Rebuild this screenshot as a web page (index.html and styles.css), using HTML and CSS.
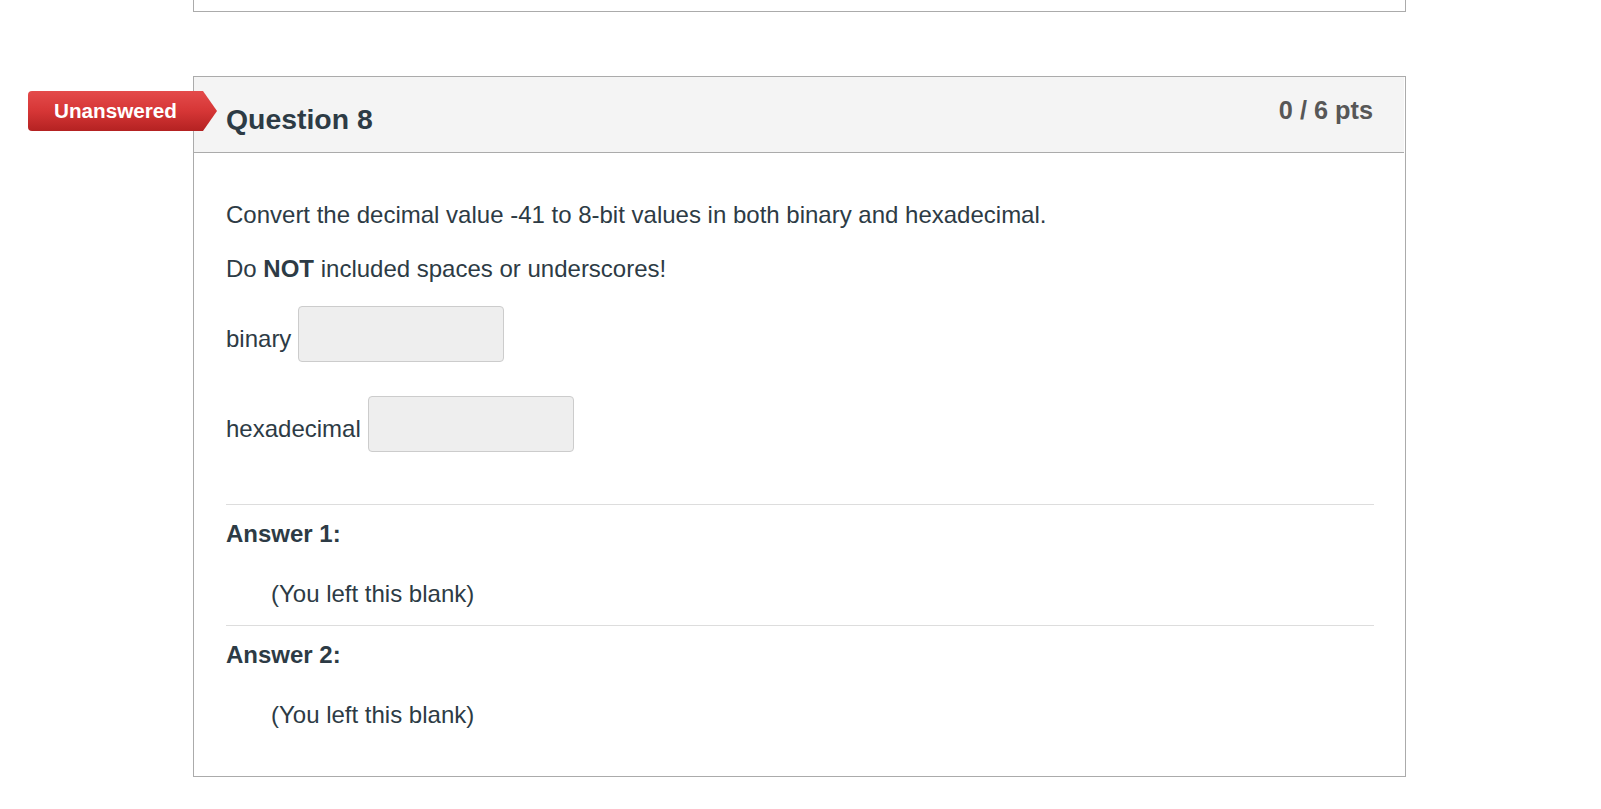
FILE: index.html
```html
<!DOCTYPE html>
<html lang="en">
<head>
<meta charset="utf-8">
<title>Question 8</title>
<link rel="stylesheet" href="styles.css">
</head>
<body>
<div class="page">
  <div class="prev-question"></div>

  <div class="question">
    <div class="badge">Unanswered</div>
    <div class="question-header">
      <h2 class="question-title">Question 8</h2>
      <div class="question-points">0 / 6 pts</div>
    </div>
    <div class="question-body">
      <p class="q-text">Convert the decimal value -41 to 8-bit values in both binary and hexadecimal.</p>
      <p class="q-text">Do <strong>NOT</strong> included spaces or underscores!</p>
      <div class="field-row">
        <span class="field-label">binary</span>
        <span class="field-input"></span>
      </div>
      <div class="field-row">
        <span class="field-label">hexadecimal</span>
        <span class="field-input"></span>
      </div>

      <div class="answers">
        <div class="answer">
          <div class="answer-label">Answer 1:</div>
          <div class="answer-value">(You left this blank)</div>
        </div>
        <div class="answer">
          <div class="answer-label">Answer 2:</div>
          <div class="answer-value">(You left this blank)</div>
        </div>
      </div>
    </div>
  </div>
</div>
</body>
</html>
```

FILE: styles.css
```css
html, body {
  margin: 0;
  padding: 0;
  background: #ffffff;
}

body {
  font-family: "Liberation Sans", Arial, sans-serif;
  color: #2d3b45;
}

.page {
  width: 1213px;
  margin-left: 193px;
}

.prev-question {
  height: 11px;
  border: 1px solid #ababab;
  border-top: none;
}

.question {
  position: relative;
  margin-top: 64px;
  border: 1px solid #ababab;
}

.badge {
  position: absolute;
  left: -166px;
  top: 14px;
  width: 189px;
  height: 40px;
  box-sizing: border-box;
  padding-right: 14px;
  border-radius: 4px 0 0 4px;
  background: linear-gradient(to bottom, #e44b4b 0%, #d63636 50%, #b42222 100%);
  clip-path: polygon(0 0, 175px 0, 189px 50%, 175px 100%, 0 100%);
  color: #ffffff;
  font-weight: bold;
  font-size: 20.7px;
  line-height: 40px;
  text-align: center;
}

.question-header {
  height: 76px;
  box-sizing: border-box;
  margin-right: 1px;
  padding: 18px 31px 0 32px;
  background: #f4f4f4;
  border-bottom: 1px solid #ababab;
  display: flex;
  justify-content: space-between;
  align-items: flex-start;
}

.question-title {
  margin: 7px 0 0 0;
  font-size: 28.4px;
  line-height: 1.2;
  font-weight: bold;
  color: #2d3b45;
}

.question-points {
  font-size: 25.3px;
  line-height: 1.2;
  font-weight: bold;
  color: #575757;
}

.question-body {
  padding: 44px 31px 43px 32px;
  font-size: 24px;
  line-height: 36px;
}

.q-text {
  margin: 0 0 18px 0;
}

.q-text strong {
  font-weight: bold;
}

.field-row {
  display: flex;
  align-items: flex-end;
  gap: 7px;
  margin-top: 19px;
}

.field-row + .field-row {
  margin-top: 34px;
}

.field-label {
  padding-bottom: 5px;
}

.field-input {
  display: block;
  width: 206px;
  height: 56px;
  box-sizing: border-box;
  background: #eeeeee;
  border: 1px solid #cccccc;
  border-radius: 4px;
}

.answers {
  margin-top: 52px;
}

.answer {
  border-top: 1px solid #dddddd;
  padding-top: 11px;
  padding-bottom: 13px;
}

.answer:last-child {
  padding-bottom: 0;
}

.answer-label {
  font-weight: bold;
}

.answer-value {
  margin-top: 24px;
  padding-left: 45px;
}
```
